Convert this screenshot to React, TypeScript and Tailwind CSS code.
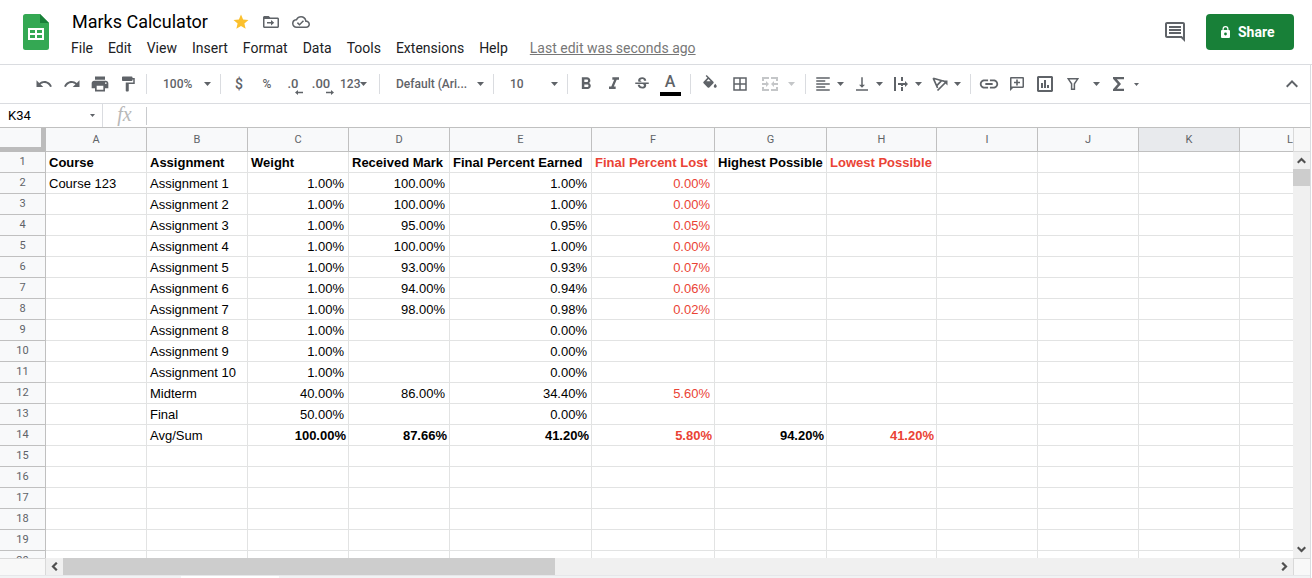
import type { ReactNode } from "react";
import {
  MdBorderAll,
  MdFormatAlignLeft,
  MdFormatBold,
  MdFormatItalic,
  MdFormatPaint,
  MdInsertLink,
  MdKeyboardArrowUp,
  MdOutlineCloudDone,
  MdOutlineComment,
  MdPrint,
  MdStar,
  MdStrikethroughS,
  MdVerticalAlignBottom,
} from "react-icons/md";

const menus = ["File", "Edit", "View", "Insert", "Format", "Data", "Tools", "Extensions", "Help"];

const columns = [
  { name: "A", width: 101 },
  { name: "B", width: 101 },
  { name: "C", width: 101 },
  { name: "D", width: 101 },
  { name: "E", width: 142 },
  { name: "F", width: 123 },
  { name: "G", width: 112 },
  { name: "H", width: 110 },
  { name: "I", width: 101 },
  { name: "J", width: 101 },
  { name: "K", width: 101 },
  { name: "L", width: 101 },
];

const rows: string[][] = [
  ["Course", "Assignment", "Weight", "Received Mark", "Final Percent Earned", "Final Percent Lost", "Highest Possible", "Lowest Possible"],
  ["Course 123", "Assignment 1", "1.00%", "100.00%", "1.00%", "0.00%"],
  ["", "Assignment 2", "1.00%", "100.00%", "1.00%", "0.00%"],
  ["", "Assignment 3", "1.00%", "95.00%", "0.95%", "0.05%"],
  ["", "Assignment 4", "1.00%", "100.00%", "1.00%", "0.00%"],
  ["", "Assignment 5", "1.00%", "93.00%", "0.93%", "0.07%"],
  ["", "Assignment 6", "1.00%", "94.00%", "0.94%", "0.06%"],
  ["", "Assignment 7", "1.00%", "98.00%", "0.98%", "0.02%"],
  ["", "Assignment 8", "1.00%", "", "0.00%"],
  ["", "Assignment 9", "1.00%", "", "0.00%"],
  ["", "Assignment 10", "1.00%", "", "0.00%"],
  ["", "Midterm", "40.00%", "86.00%", "34.40%", "5.60%"],
  ["", "Final", "50.00%", "", "0.00%"],
  ["", "Avg/Sum", "100.00%", "87.66%", "41.20%", "5.80%", "94.20%", "41.20%"],
  [],
  [],
  [],
  [],
  [],
  [],
];

function cellClass(row: number, col: number) {
  const align = row > 0 && col > 1 ? "text-right" : "text-left";
  const padding = row === 13 && col > 1 ? "pr-0.5" : "pr-1 pl-[3px]";
  const weight = row === 0 || (row === 13 && col > 1) ? "font-bold" : "font-normal";
  const color = col === 5 || col === 7 ? "text-[#ea4335]" : "text-black";
  return `h-[21px] border-r border-b border-[#e2e3e3] pt-0.5 pb-0 leading-[18px] whitespace-nowrap ${align} ${padding} ${weight} ${color}`;
}

function Caret() {
  return (
    <svg className="h-1 w-[7px] shrink-0" viewBox="0 0 7 4" fill="currentColor">
      <path d="M0 0h7L3.5 4z" />
    </svg>
  );
}

function SmallCaret() {
  return (
    <svg className="h-[3px] w-[5px] shrink-0" viewBox="0 0 5 3" fill="currentColor">
      <path d="M0 0h5L2.5 3z" />
    </svg>
  );
}

function Separator() {
  return <div className="h-5 w-px shrink-0 bg-[#dadce0]" />;
}

function ToolButton({ label, children }: { label: string; children: ReactNode }) {
  return (
    <button aria-label={label} className="flex h-7 w-7 shrink-0 items-center justify-center">
      {children}
    </button>
  );
}

// icon with its own drop-down arrow
function SplitButton({ label, children }: { label: string; children: ReactNode }) {
  return (
    <button aria-label={label} className="flex h-7 w-[39px] shrink-0 items-center pl-0.5">
      <span className="flex w-6 justify-center">{children}</span>
      <span className="flex w-2.5 justify-center">
        <Caret />
      </span>
    </button>
  );
}

function ToolSelect({ label, value, className }: { label: string; value: string; className: string }) {
  return (
    <div className={`relative flex h-7 shrink-0 items-center ${className}`}>
      <select
        aria-label={label}
        defaultValue={value}
        className="h-7 w-full appearance-none bg-transparent pr-5 pl-4 text-xs font-medium outline-none"
      >
        <option>{value}</option>
      </select>
      <span className="pointer-events-none absolute right-[9px]">
        <Caret />
      </span>
    </div>
  );
}

function Chevron({ className }: { className: string }) {
  return (
    <svg className={`h-[9px] w-[9px] ${className}`} viewBox="0 0 9 9" fill="none" stroke="#505050" strokeWidth="2.2">
      <path d="M.7 6.8 4.5 3l3.8 3.8" />
    </svg>
  );
}

function SheetsLogo() {
  return (
    <svg className="h-9 w-[26px]" viewBox="0 0 26 36">
      <path d="M2.5 0H17l9 9v24.5a2.500 2.500 0 0 1-2.500 2.500h-21A2.500 2.500 0 0 1 0 33.500v-31A2.500 2.500 0 0 1 2.500 0z" fill="#34a853" />
      <path d="M17 0l9 9h-9z" fill="#188038" />
      <path d="M5 14h16v12H5zM7 16v3h5v-3zm7 0v3h5v-3zm-7 5v3h5v-3zm7 0v3h5v-3z" fill="#fff" fillRule="evenodd" />
    </svg>
  );
}

function UndoIcon({ className }: { className: string }) {
  return (
    <svg className={`h-[18px] w-[18px] ${className}`} viewBox="0 0 24 24" fill="currentColor">
      <path d="M12.5 8c-2.650 0-5.050.990-6.900 2.600L2 7v9h9l-3.620-3.620c1.390-1.160 3.160-1.880 5.120-1.880 3.540 0 6.550 2.310 7.600 5.500l2.370-.780C21.080 11.030 17.150 8 12.500 8z" />
    </svg>
  );
}

function MoveIcon() {
  return (
    <svg className="h-[18px] w-[18px]" viewBox="0 0 18 18" fill="#5f6368">
      <path d="M2.500 3h4.200l1.600 1.600h7.200c.8 0 1.500.6 1.500 1.400v7.500c0 .8-.7 1.500-1.500 1.500h-13C1.700 15 1 14.300 1 13.500v-9C1 3.700 1.700 3 2.500 3zm0 3v7.500h13V6z" />
      <path d="M5 9h4V6.900l3.200 2.900L9 12.600v-2.100H5z" />
    </svg>
  );
}

function FillIcon() {
  return (
    <svg className="h-[18px] w-[18px]" viewBox="0 0 24 24" fill="currentColor">
      <path d="M16.560 8.940 7.620 0 6.210 1.410l2.380 2.380-5.150 5.150a1.490 1.490 0 0 0 0 2.120l5.500 5.500c.29.290.68.440 1.060.440s.77-.15 1.060-.44l5.500-5.500c.59-.58.59-1.530 0-2.120zM7.200 8.200 10 5.400l2.800 2.800zM19 11.500s-2 2.170-2 3.500c0 1.100.9 2 2 2s2-.9 2-2c0-1.330-2-3.500-2-3.500z" />
    </svg>
  );
}

function MergeIcon() {
  return (
    <svg className="h-[14px] w-4" viewBox="0 0 16 14" fill="currentColor">
      <path d="M0 0h7v2H2v2H0zM9 0h7v4h-2V2H9zM0 10h2v2h5v2H0zM14 10h2v4H9v-2h5zM0 6h4V4l3 3-3 3V8H0zM16 6h-4V4L9 7l3 3V8h4z" />
    </svg>
  );
}

function OverflowIcon() {
  return (
    <svg className="h-[14px] w-[14px]" viewBox="0 0 14 14" fill="currentColor">
      <path d="M0 0h2v14H0zM7 0h2v4H7zM7 10h2v4H7zM4 6h7V4l3 3-3 3V8H9v1H7V8H4z" />
    </svg>
  );
}

function RotateIcon() {
  return (
    <svg className="h-4 w-4" viewBox="0 0 16 16" fill="none" stroke="currentColor" strokeWidth="1.7">
      <path d="M1.200 2.200 12 5.300M1.200 2.200 5.600 12M9.300 4.800 5 9.400" />
      <path d="M5.500 14.500 14 6" />
      <path d="M15.500 4.500v5l-5-5z" fill="currentColor" stroke="none" />
    </svg>
  );
}

function AddCommentIcon() {
  return (
    <svg className="h-[14px] w-[14px]" viewBox="0 0 14 14" fill="currentColor">
      <path d="M1.200 0h11.600c.7 0 1.200.5 1.200 1.200v8.600c0 .7-.5 1.200-1.200 1.200H3l-3 3V1.200C0 .5.500 0 1.200 0zm.3 1.500v8h11v-8z" fillRule="evenodd" />
      <path d="M6.200 2.500h1.600v2.200H10v1.600H7.800v2.200H6.200V6.300H4V4.700h2.200z" />
    </svg>
  );
}

function ChartIcon() {
  return (
    <svg className="h-4 w-4" viewBox="0 0 16 16" fill="currentColor">
      <path d="M1 0h14l1 1v14l-1 1H1l-1-1V1zm1 2v12h12V2z" fillRule="evenodd" />
      <path d="M4 7h2v5H4zM7 4h2v8H7zM10 9h2v3h-2z" />
    </svg>
  );
}

function FilterIcon() {
  return (
    <svg className="h-3 w-3" viewBox="0 0 12 12" fill="none" stroke="currentColor" strokeWidth="1.5">
      <path d="M1.200.8h9.600L7.400 5.800v5.400H4.600V5.800z" />
    </svg>
  );
}

function SumIcon() {
  return (
    <svg className="h-[14px] w-[11px]" viewBox="0 0 11 14" fill="currentColor">
      <path d="M0 0h11v2.200H3.900L8 7l-4.100 4.800H11V14H0v-1.800L4.700 7 0 1.800z" />
    </svg>
  );
}

function LockIcon() {
  return (
    <svg className="h-3 w-[9px]" viewBox="0 0 9 12" fill="#fff">
      <path d="M1.500 4V3a3 3 0 0 1 6 0v1h.5a1 1 0 0 1 1 1v6a1 1 0 0 1-1 1H1a1 1 0 0 1-1-1V5a1 1 0 0 1 1-1zm1.200 0h3.600V3a1.800 1.800 0 0 0-3.600 0zm1.800 2.600a1.400 1.400 0 1 0 0 2.800 1.400 1.400 0 0 0 0-2.800z" fillRule="evenodd" />
    </svg>
  );
}

function DecimalIcon({ digits, direction }: { digits: string; direction: "left" | "right" }) {
  return (
    <span className="flex flex-col items-end pt-1 text-[13px] leading-3 font-medium">
      <span className="pr-1">{digits}</span>
      <svg className="h-[5px] w-2" viewBox="0 0 8 5" fill="currentColor">
        {direction === "left" ? <path d="M0 2.500 3 0v1.700h5v1.600H3V5z" /> : <path d="M8 2.500 5 0v1.700H0v1.600h5V5z" />}
      </svg>
    </span>
  );
}

function Header() {
  return (
    <header className="flex h-[65px] shrink-0 items-start border-b border-[#dadce0] pt-[14px] pr-[18px] pl-[23px]">
      <SheetsLogo />
      <div className="-mt-1 ml-[15px] flex-1">
        <div className="flex h-6 items-center pl-2">
          <h1 className="text-lg leading-6 text-black">Marks Calculator</h1>
          <div className="ml-6 flex items-center gap-3 text-[#5f6368]">
            <button aria-label="Star">
              <MdStar className="h-[18px] w-[18px] text-[#fbc02d]" />
            </button>
            <button aria-label="Move">
              <MoveIcon />
            </button>
            <button aria-label="See document status">
              <MdOutlineCloudDone className="h-[18px] w-[18px]" />
            </button>
          </div>
        </div>
        <nav className="flex h-7 items-center gap-px text-sm text-[#202124]">
          {menus.map((menu) => (
            <button key={menu} className="px-[7px]">
              {menu}
            </button>
          ))}
          <a href="#history" className="ml-[14px] text-[#777777] underline">
            Last edit was seconds ago
          </a>
        </nav>
      </div>
      <button aria-label="Open comment history" className="mr-[19px] flex h-9 w-6 items-center justify-center text-[#5f6368]">
        <MdOutlineComment className="h-6 w-6" />
      </button>
      <button className="flex h-9 w-[88px] items-center gap-2 rounded bg-[#188038] pl-[15px] text-sm font-bold text-white">
        <LockIcon />
        Share
      </button>
    </header>
  );
}

function Toolbar() {
  return (
    <div className="flex h-[39px] shrink-0 items-center border-b border-[#dadce0] pl-[30px] text-[#5f6368]">
      <div className="flex pr-1">
        <ToolButton label="Undo">
          <UndoIcon className="" />
        </ToolButton>
        <ToolButton label="Redo">
          <UndoIcon className="-scale-x-100" />
        </ToolButton>
        <ToolButton label="Print">
          <MdPrint className="h-5 w-5" />
        </ToolButton>
        <ToolButton label="Paint format">
          <MdFormatPaint className="h-[18px] w-[18px]" />
        </ToolButton>
      </div>
      <Separator />
      <ToolSelect label="Zoom" value="100%" className="w-[73px]" />
      <Separator />
      <div className="flex pr-1.5 pl-1 text-sm font-medium">
        <ToolButton label="Format as currency">$</ToolButton>
        <ToolButton label="Format as percent">
          <span className="text-xs">%</span>
        </ToolButton>
        <ToolButton label="Decrease decimal places">
          <DecimalIcon digits=".0" direction="left" />
        </ToolButton>
        <ToolButton label="Increase decimal places">
          <DecimalIcon digits=".00" direction="right" />
        </ToolButton>
        <button aria-label="More formats" className="flex h-7 w-9 items-center text-xs pl-[3px]">
          123
          <Caret />
        </button>
      </div>
      <Separator />
      <ToolSelect label="Font" value="Default (Ari..." className="w-[113px]" />
      <Separator />
      <ToolSelect label="Font size" value="10" className="w-[73px]" />
      <Separator />
      <div className="flex pr-1.5 pl-1">
        <ToolButton label="Bold">
          <MdFormatBold className="h-5 w-5" />
        </ToolButton>
        <ToolButton label="Italic">
          <MdFormatItalic className="h-5 w-5" />
        </ToolButton>
        <ToolButton label="Strikethrough">
          <MdStrikethroughS className="h-[18px] w-[18px]" />
        </ToolButton>
        <ToolButton label="Text color">
          <span className="flex w-[21px] flex-col items-center border-b-4 border-black pb-px text-base leading-[19px] font-medium">
            A
          </span>
        </ToolButton>
      </div>
      <Separator />
      <div className="flex items-center gap-0.5 pr-[7px] pl-[5px]">
        <ToolButton label="Fill color">
          <FillIcon />
        </ToolButton>
        <ToolButton label="Borders">
          <MdBorderAll className="h-[18px] w-[18px]" />
        </ToolButton>
        <button aria-label="Merge cells" disabled className="flex h-7 w-[42px] items-center gap-2.5 pl-1.5 text-[#c4c6c8]">
          <MergeIcon />
          <Caret />
        </button>
      </div>
      <Separator />
      <div className="flex pr-[5px] pl-[3px]">
        <SplitButton label="Horizontal align">
          <MdFormatAlignLeft className="h-[18px] w-[18px]" />
        </SplitButton>
        <SplitButton label="Vertical align">
          <MdVerticalAlignBottom className="h-[18px] w-[18px]" />
        </SplitButton>
        <SplitButton label="Text wrapping">
          <OverflowIcon />
        </SplitButton>
        <SplitButton label="Text rotation">
          <RotateIcon />
        </SplitButton>
      </div>
      <Separator />
      <div className="flex items-center pl-1">
        <ToolButton label="Insert link">
          <MdInsertLink className="h-[22px] w-[22px]" />
        </ToolButton>
        <ToolButton label="Insert comment">
          <AddCommentIcon />
        </ToolButton>
        <ToolButton label="Insert chart">
          <ChartIcon />
        </ToolButton>
        <ToolButton label="Create a filter">
          <FilterIcon />
        </ToolButton>
        <button aria-label="Filter views" className="flex h-7 w-[18px] items-center justify-center">
          <Caret />
        </button>
        <button aria-label="Functions" className="flex h-7 items-center gap-2.5 px-2">
          <SumIcon />
          <SmallCaret />
        </button>
      </div>
      <button aria-label="Hide the menus" className="mr-2 ml-auto flex h-7 w-5 items-center justify-center">
        <MdKeyboardArrowUp className="h-6 w-6 shrink-0" />
      </button>
    </div>
  );
}

function FormulaBar() {
  return (
    <div className="flex h-6 shrink-0 items-center border-b border-[#c0c0c0]">
      <div className="flex h-full w-[103px] items-center border-r border-[#dadce0] pr-[7px] pl-2">
        <input aria-label="Name box" defaultValue="K34" className="w-full min-w-0 text-[13px] text-black outline-none" />
        <button aria-label="Named ranges" className="flex text-[#5f6368]">
          <SmallCaret />
        </button>
      </div>
      <label htmlFor="formula" className="w-[43px] pb-1 text-center font-['Liberation_Serif',serif] text-xl leading-5 text-[#b8b8b8] italic">
        fx
      </label>
      <div className="h-[18px] w-px bg-[#c9cbce]" />
      <input id="formula" className="h-full min-w-0 flex-1 px-2 text-[13px] outline-none" />
    </div>
  );
}

function Grid() {
  return (
    <div className="min-w-0 flex-1 overflow-hidden">
      <table className="w-[1341px] table-fixed border-separate border-spacing-0 font-['Liberation_Sans',Arial,sans-serif] text-[13px]">
        <colgroup>
          <col className="w-[46px]" />
          {columns.map((column) => (
            <col key={column.name} style={{ width: column.width }} />
          ))}
        </colgroup>
        <thead className="font-[Roboto,sans-serif] text-[11px] text-[#5f6368]">
          <tr>
            <td className="h-6 border-r-[5px] border-b-[5px] border-[#bcbcbc] bg-[#f8f9fa] p-0" />
            {columns.map((column) => (
              <th
                key={column.name}
                className={`h-6 border-r border-b border-[#c0c0c0] px-0 pt-0.5 pb-0 font-normal ${column.name === "K" ? "bg-[#e8eaed]" : "bg-[#f8f9fa]"}`}
              >
                {column.name}
              </th>
            ))}
          </tr>
        </thead>
        <tbody>
          {rows.map((row, r) => (
            <tr key={r}>
              <th className="h-[21px] border-r border-b border-[#c0c0c0] bg-[#f8f9fa] p-0 font-[Roboto,sans-serif] text-[11px] leading-5 font-normal text-[#5f6368]">
                {r + 1}
              </th>
              {columns.map((column, c) => (
                <td key={column.name} className={cellClass(r, c)}>
                  {row[c]}
                </td>
              ))}
            </tr>
          ))}
        </tbody>
      </table>
    </div>
  );
}

function VerticalScrollbar() {
  return (
    <div className="flex w-[17px] shrink-0 flex-col bg-[#f0f0f0]">
      <div className="h-6 border-b border-l border-[#d9d9d9] bg-[#f8f8f8]" />
      <button aria-label="Scroll up" className="flex h-[17px] items-center justify-center">
        <Chevron className="" />
      </button>
      <div className="h-[17px] bg-[#cdcdcd]" />
      <button aria-label="Scroll down" className="mt-auto flex h-[17px] items-center justify-center">
        <Chevron className="rotate-180" />
      </button>
    </div>
  );
}

function HorizontalScrollbar() {
  return (
    <div className="flex h-[17px] shrink-0 bg-[#f0f0f0]">
      <div className="w-[46px] border-t border-r border-[#d9d9d9] bg-[#f8f8f8]" />
      <button aria-label="Scroll left" className="flex w-[17px] items-center justify-center">
        <Chevron className="-rotate-90" />
      </button>
      <div className="flex-1">
        <div className="h-full w-[40.6%] bg-[#cdcdcd]" />
      </div>
      <button aria-label="Scroll right" className="flex w-[17px] items-center justify-center">
        <Chevron className="rotate-90" />
      </button>
      <div className="w-[17px] border-t border-l border-[#d9d9d9] bg-[#f8f8f8]" />
    </div>
  );
}

export default function App() {
  return (
    <div className="flex h-screen flex-col overflow-hidden bg-white font-[Roboto,sans-serif]">
      <Header />
      <main className="mr-px flex min-h-0 flex-1 flex-col border-r border-[#dadce0]">
        <Toolbar />
        <FormulaBar />
        <div className="flex min-h-0 flex-1">
          <Grid />
          <VerticalScrollbar />
        </div>
        <HorizontalScrollbar />
        {/* top edge of the sheet tabs */}
        <div className="flex h-[3px] shrink-0 border-t border-[#e6e7ea] bg-[#f1f3f4]">
          <div className="ml-[181px] w-[98px] bg-white" />
        </div>
      </main>
    </div>
  );
}
